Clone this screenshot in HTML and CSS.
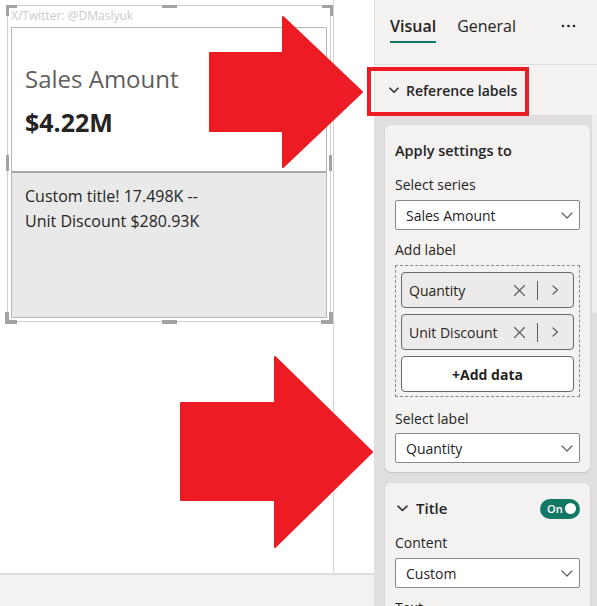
FILE: index.html
```html
<!DOCTYPE html>
<html lang="en">
<head>
<meta charset="utf-8">
<title>Reference labels</title>
<link rel="stylesheet" href="styles.css">
</head>
<body>
<div class="app">
  <div class="workspace">
    <div class="canvas">
      <div class="page">
        <div class="frame">
          <span class="h h-tl"></span>
          <span class="h h-tr"></span>
          <span class="h h-bl"></span>
          <span class="h h-br"></span>
          <span class="h h-mt"></span>
          <span class="h h-mb"></span>
          <span class="h h-ml"></span>
          <span class="h h-mr"></span>
          <div class="watermark">X/Twitter: @DMaslyuk</div>
          <div class="visual">
            <div class="kpi">
              <div class="kpi-title">Sales Amount</div>
              <div class="kpi-value">$4.22M</div>
            </div>
            <div class="ref">
              <div>Custom title! 17.498K --</div>
              <div>Unit Discount $280.93K</div>
            </div>
          </div>
        </div>
      </div>
    </div>
    <div class="strip"></div>
  </div>

  <aside class="panel">
    <div class="tabs">
      <div class="tab active">Visual</div>
      <div class="tab">General</div>
      <svg class="more" width="16" height="6" viewBox="0 0 16 6"><circle cx="2" cy="3" r="1.3"/><circle cx="7.5" cy="3" r="1.3"/><circle cx="13" cy="3" r="1.3"/></svg>
    </div>
    <div class="sec-head">
      <svg class="chev" width="10" height="7" viewBox="0 0 10 7"><path d="M1 1.2 L5 5.2 L9 1.2"/></svg>
      <span>Reference labels</span>
    </div>
    <div class="sec-body">
      <div class="pcard">
        <div class="ctitle">Apply settings to</div>
        <div class="label first">Select series</div>
        <div class="dropdown">
          <span>Sales Amount</span>
          <svg class="dd-chev" width="12" height="7" viewBox="0 0 12 7"><path d="M1 1 L6 6 L11 1"/></svg>
        </div>
        <div class="label">Add label</div>
        <div class="well">
          <div class="item">
            <span class="item-name">Quantity</span>
            <svg class="x" width="11" height="11" viewBox="0 0 11 11"><path d="M0.5 0.5 L10.5 10.5 M10.5 0.5 L0.5 10.5"/></svg>
            <span class="sep"></span>
            <svg class="ichev" width="7" height="10" viewBox="0 0 7 10"><path d="M1 1 L5.5 5 L1 9"/></svg>
          </div>
          <div class="item">
            <span class="item-name">Unit Discount</span>
            <svg class="x" width="11" height="11" viewBox="0 0 11 11"><path d="M0.5 0.5 L10.5 10.5 M10.5 0.5 L0.5 10.5"/></svg>
            <span class="sep"></span>
            <svg class="ichev" width="7" height="10" viewBox="0 0 7 10"><path d="M1 1 L5.5 5 L1 9"/></svg>
          </div>
          <div class="add">+Add data</div>
        </div>
        <div class="label sl">Select label</div>
        <div class="dropdown tight">
          <span>Quantity</span>
          <svg class="dd-chev" width="12" height="7" viewBox="0 0 12 7"><path d="M1 1 L6 6 L11 1"/></svg>
        </div>
      </div>

      <div class="pcard second">
        <div class="row">
          <svg class="chev big" width="11" height="7" viewBox="0 0 11 7"><path d="M1 1.2 L5.5 5.5 L10 1.2"/></svg>
          <span class="ctitle inline">Title</span>
          <div class="toggle"><span>On</span><span class="knob"></span></div>
        </div>
        <div class="label content">Content</div>
        <div class="dropdown">
          <span>Custom</span>
          <svg class="dd-chev" width="12" height="7" viewBox="0 0 12 7"><path d="M1 1 L6 6 L11 1"/></svg>
        </div>
        <div class="label">Text</div>
      </div>
      <div class="thumb"></div>
    </div>
  </aside>
</div>

<div class="redbox"></div>
<svg class="arrows" width="597" height="606" viewBox="0 0 597 606">
  <polygon points="210,53 283,53 283,17 362,92 283,167 283,131 210,131"/>
  <polygon points="181,403 275,403 275,357 372,452 275,547 275,500 181,500"/>
</svg>
</body>
</html>
```

FILE: styles.css
```css
* { box-sizing: border-box; }

html, body {
  margin: 0;
  padding: 0;
}

body {
  width: 597px;
  height: 606px;
  overflow: hidden;
  position: relative;
  font-family: "Open Sans", "Noto Sans", sans-serif;
  color: #252423;
  background: #ffffff;
}

.app {
  display: flex;
  width: 597px;
  height: 606px;
}

/* ---------- left canvas ---------- */
.workspace {
  width: 374px;
  flex-shrink: 0;
  display: flex;
  flex-direction: column;
}

.canvas {
  flex: 1;
  min-height: 0;
  background: #ffffff;
}

.page {
  width: 334px;
  height: 100%;
  border-right: 1px solid #d4d4d4;
  padding-top: 5px;
  padding-left: 7px;
}

.frame {
  position: relative;
  width: 324px;
  height: 317px;
  border: 1px solid #cfcfcf;
}

.h {
  position: absolute;
  background: transparent;
  border-color: #a3a3a3;
  border-style: solid;
  border-width: 0;
}
.h-tl { left: -2px; top: -1px; width: 11px; height: 11px; border-left-width: 3px; border-top-width: 3px; }
.h-tr { right: -3px; top: -1px; width: 11px; height: 11px; border-right-width: 3px; border-top-width: 3px; }
.h-bl { left: -3px; bottom: -3px; width: 12px; height: 12px; border-left-width: 4px; border-bottom-width: 4px; }
.h-br { right: -3px; bottom: -3px; width: 12px; height: 12px; border-right-width: 4px; border-bottom-width: 4px; }
.h-mt { left: 154px; top: -1px; width: 15px; height: 3px; background: #a3a3a3; }
.h-mb { left: 154px; bottom: -3px; width: 15px; height: 4px; background: #a3a3a3; }
.h-ml { left: -2px; top: 149px; width: 3px; height: 16px; background: #a3a3a3; }
.h-mr { right: -2px; top: 149px; width: 3px; height: 16px; background: #a3a3a3; }

.watermark {
  height: 21px;
  padding: 2px 0 0 3px;
  font-size: 12px;
  line-height: 16px;
  color: #cbcbcb;
}

.visual {
  margin-left: 3px;
  width: 316px;
  height: 291px;
  border: 1px solid #b8b8b8;
  display: flex;
  flex-direction: column;
}

.kpi {
  height: 145px;
  background: #ffffff;
  border-bottom: 2px solid #a9a9a9;
  padding: 35px 0 0 13px;
}

.kpi-title {
  font-size: 24px;
  line-height: 32px;
  color: #605e5c;
}

.kpi-value {
  margin-top: 11px;
  font-size: 25px;
  line-height: 32px;
  font-weight: 700;
  color: #252423;
}

.ref {
  flex: 1;
  background: #e9e9e9;
  padding: 11px 0 0 13px;
  font-size: 16px;
  line-height: 25px;
  color: #252423;
}

.strip {
  height: 33px;
  flex-shrink: 0;
  background: #f3f2f1;
  border-top: 2px solid #dedede;
}

/* ---------- right panel ---------- */
.panel {
  width: 223px;
  flex-shrink: 0;
  background: #f3f2f1;
  border-left: 1px solid #e1dfdd;
  display: flex;
  flex-direction: column;
}

.tabs {
  height: 65px;
  flex-shrink: 0;
  border-bottom: 1px solid #e1dfdd;
  display: flex;
  align-items: flex-start;
  padding: 15px 0 0 15px;
}

.tab {
  font-size: 16px;
  line-height: 22px;
  padding-bottom: 4px;
  margin-right: 21px;
  color: #252423;
}

.tab.active {
  font-weight: 600;
  border-bottom: 2px solid #117865;
}

.more {
  margin-left: auto;
  margin-right: 20px;
  margin-top: 8px;
  fill: #252423;
}

.sec-head {
  height: 50px;
  flex-shrink: 0;
  display: flex;
  align-items: center;
  padding-left: 14px;
  gap: 7px;
  font-size: 14px;
  font-weight: 600;
}

.chev path {
  fill: none;
  stroke: #323130;
  stroke-width: 1.6;
  stroke-linecap: round;
  stroke-linejoin: round;
}

.sec-body {
  position: relative;
  flex: 1;
  min-height: 0;
  overflow: hidden;
  background: #e1dfdd;
  padding: 10px 7px 0 11px;
  margin-left: -1px;
}

.pcard {
  background: #f3f2f1;
  border-radius: 6px;
  box-shadow: 0 1px 2px rgba(0, 0, 0, 0.14);
  padding: 16px 10px 9px 10px;
}

.pcard.second {
  margin-top: 11px;
  padding-top: 14px;
}

.ctitle {
  font-size: 14.5px;
  line-height: 20px;
  font-weight: 600;
}

.label {
  margin-top: 10px;
  font-size: 14px;
  line-height: 20px;
}
.label.first { margin-top: 14px; }
.label.sl { margin-top: 12px; }
.label.content { margin-top: 14px; }

.dropdown {
  margin-top: 5px;
  height: 30px;
  background: #ffffff;
  border: 1px solid #8a8886;
  border-radius: 2px;
  display: flex;
  align-items: center;
  justify-content: space-between;
  padding: 0 6px 0 10px;
  font-size: 14px;
}
.dropdown.tight { margin-top: 4px; }

.dd-chev path,
.x path,
.ichev path {
  fill: none;
  stroke: #605e5c;
  stroke-width: 1.2;
  stroke-linecap: round;
  stroke-linejoin: round;
}

.well {
  margin-top: 5px;
  border: 1px dashed #8a8886;
  padding: 6px 5px 4px 5px;
  display: flex;
  flex-direction: column;
  gap: 6px;
}

.item {
  height: 36px;
  background: #edebe9;
  border: 1px solid #6b6966;
  border-radius: 4px;
  display: flex;
  align-items: center;
  padding: 0 14px 0 7px;
  font-size: 14px;
}

.item-name { flex: 1; }

.sep {
  width: 1px;
  height: 19px;
  background: #605e5c;
  margin: 0 14px 0 12px;
}

.add {
  height: 36px;
  background: #ffffff;
  border: 1px solid #6b6966;
  border-radius: 4px;
  display: flex;
  align-items: center;
  justify-content: center;
  font-size: 14px;
  font-weight: 700;
}

.row {
  height: 22px;
  display: flex;
  align-items: center;
  padding-left: 2px;
}

.chev.big { margin-right: 8px; }

.ctitle.inline { flex: 1; font-size: 15px; }

.toggle {
  width: 40px;
  height: 20px;
  border-radius: 10px;
  background: #117865;
  color: #ffffff;
  display: flex;
  align-items: center;
  justify-content: space-between;
  padding: 0 4px 0 7px;
  font-size: 11px;
  font-weight: 600;
  margin-top: 1px;
}

.knob {
  width: 11px;
  height: 11px;
  border-radius: 50%;
  background: #ffffff;
}

.thumb {
  position: absolute;
  right: 0;
  top: 0;
  width: 5px;
  height: 198px;
  border-radius: 0 0 2px 2px;
  background: #f0efee;
}

/* ---------- annotations ---------- */
.redbox {
  position: absolute;
  left: 367px;
  top: 67px;
  width: 162px;
  height: 49px;
  border: 4px solid #ed1c24;
}

.arrows {
  position: absolute;
  left: 0;
  top: 0;
  pointer-events: none;
}

.arrows polygon {
  fill: #ed1c24;
  stroke: #ed1c24;
  stroke-width: 2;
  stroke-linejoin: round;
}
```
